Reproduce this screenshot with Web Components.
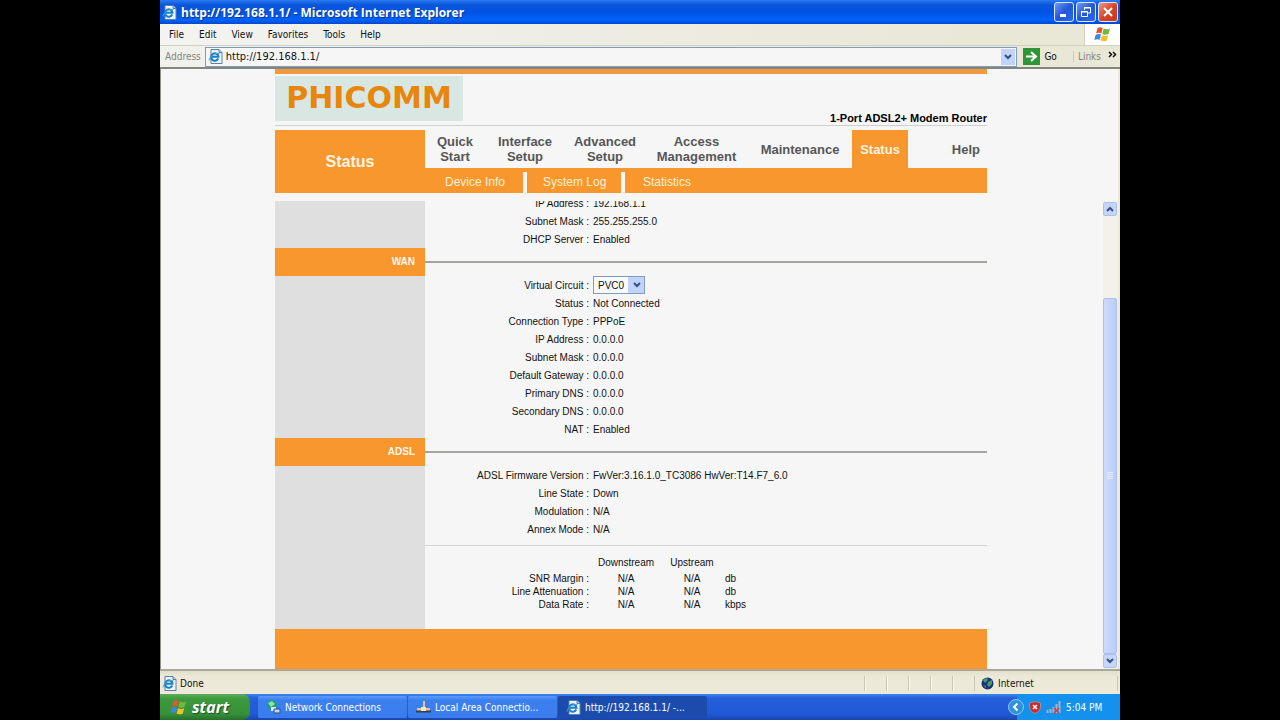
<!DOCTYPE html>
<html lang="en">
<head>
<meta charset="utf-8">
<title>http://192.168.1.1/ - Microsoft Internet Explorer</title>
<style>
    body {
        margin: 0;
        background: #000;
        font-family: "DejaVu Sans Condensed", "DejaVu Sans", sans-serif;
        font-size: 10px;
        color: #111;
    }
</style>
</head>
<body>
<xp-desktop>
    <title-bar>http://192.168.1.1/ - Microsoft Internet Explorer</title-bar>
    <menu-bar></menu-bar>
    <address-bar></address-bar>
    <router-page>
        <router-header slot="header"></router-header>
        <info-section>
            <info-row label="IP Address">192.168.1.1</info-row>
            <info-row label="Subnet Mask">255.255.255.0</info-row>
            <info-row label="DHCP Server">Enabled</info-row>
        </info-section>
        <info-section heading="WAN">
            <info-row label="Virtual Circuit"><circuit-select></circuit-select></info-row>
            <info-row label="Status">Not Connected</info-row>
            <info-row label="Connection Type">PPPoE</info-row>
            <info-row label="IP Address">0.0.0.0</info-row>
            <info-row label="Subnet Mask">0.0.0.0</info-row>
            <info-row label="Default Gateway">0.0.0.0</info-row>
            <info-row label="Primary DNS">0.0.0.0</info-row>
            <info-row label="Secondary DNS">0.0.0.0</info-row>
            <info-row label="NAT">Enabled</info-row>
        </info-section>
        <info-section heading="ADSL">
            <info-row label="ADSL Firmware Version">FwVer:3.16.1.0_TC3086 HwVer:T14.F7_6.0</info-row>
            <info-row label="Line State">Down</info-row>
            <info-row label="Modulation">N/A</info-row>
            <info-row label="Annex Mode">N/A</info-row>
            <line-stats></line-stats>
        </info-section>
    </router-page>
    <status-bar></status-bar>
    <task-bar></task-bar>
</xp-desktop>

<script>
const ieIcon = `<svg class="ie" width="15" height="15" viewBox="0 0 15 15" aria-hidden="true">
    <path d="M3 .5h8l3 3v11H3z" fill="#eef6fd" stroke="#5b7fa8"/>
    <path d="M11 .5v3h3" fill="#b9cfe6" stroke="#5b7fa8"/>
    <path d="M10.2 9.5A3.7 3.7 0 1 1 10.5 7.800H4" fill="none" stroke="#1b7fc4" stroke-width="2"/>
    <path d="M1 11.500C1 8 7 3.500 11.500 4.500" fill="none" stroke="#4ba4dc"/>
</svg>`;

const flagIcon = `<svg width="18" height="17" viewBox="0 0 18 17" aria-hidden="true">
    <path d="M3.500 2C5.500.8 7 1 8.700 2L7.300 7.600C5.500 6.600 4 6.600 2 7.500z" fill="#e4572b"/>
    <path d="M9.700 2.600C11.500 3.600 13.500 3.600 16 2.500L14.500 8C12.500 9 10.500 9 8.300 8z" fill="#72b83a"/>
    <path d="M1.700 8.700C4 7.700 5.500 7.800 7 8.700L5.600 14C4 13 2.500 13 .3 13.900z" fill="#3f86dd"/>
    <path d="M8 9.200C10 10.200 12 10.200 14.200 9.200L12.800 14.500C10.500 15.700 8.500 15.500 6.600 14.500z" fill="#f5c02c"/>
</svg>`;

const chevron = dir => `<svg width="8" height="8" viewBox="0 0 8 8" aria-hidden="true">
    <path d="${dir === "up" ? "M1 6L4 3L7 6" : "M1 2L4 5L7 2"}" fill="none" stroke="#34507f" stroke-width="2"/>
</svg>`;

const reset = `
    :host, * {
        box-sizing: border-box;
    }
    svg {
        display: block;
        flex: none;
    }
    button {
        font: inherit;
        color: inherit;
        border: 0;
        padding: 0;
        background: none;
    }
    a {
        color: inherit;
        text-decoration: none;
    }
`;

class BaseElement extends HTMLElement {

    constructor() {
        super();
        this.shadowDOM = this.attachShadow({mode: "open"});
    }

    connectedCallback() {
        this.shadowDOM.innerHTML = `<style>${reset}</style>` + this.render();
    }
}

class XpDesktop extends BaseElement {
    render() {
        return `
        <style>
            :host {
                display: flex;
                flex-direction: column;
                width: 75%;
                height: 100vh;
                margin: 0 auto;
                background: #ece9d8;
                overflow: hidden;
            }
            ::slotted(router-page) {
                flex: 1;
                min-height: 0;
            }
        </style>
        <slot></slot>`;
    }
}

class TitleBar extends BaseElement {
    render() {
        return `
        <style>
            :host {
                display: flex;
                align-items: center;
                gap: 4px;
                height: 24px;
                flex: none;
                padding: 0 2px;
                background: linear-gradient(#2a7af0, #0a56dc 5px, #0053e1 12px, #0062fb 20px, #0048cc);
                color: #fff;
            }
            h1 {
                flex: 1;
                margin: 0;
                font: bold 12px "Open Sans", sans-serif;
                text-shadow: 1px 1px #0b3a94;
            }
            .buttons {
                display: flex;
                gap: 2px;
            }
            button {
                display: grid;
                place-items: center;
                width: 20px;
                height: 20px;
                border: 1px solid #dce7fb;
                border-radius: 3px;
                background: linear-gradient(135deg, #6e9cf4, #2257d8 50%, #2c68e8);
            }
            .close {
                background: linear-gradient(135deg, #f0987a, #d8452a 50%, #c23a18);
            }
        </style>
        ${ieIcon}
        <h1><slot></slot></h1>
        <div class="buttons">
            <button aria-label="Minimize"><svg width="14" height="14"><path d="M3 10.500h6" stroke="#fff" stroke-width="3"/></svg></button>
            <button aria-label="Restore"><svg width="14" height="14" fill="none" stroke="#fff"><path d="M5.500 5V2.500h6v5.500H9M5 3h7M2.500 6.500h6v5h-6zM2 7h7"/></svg></button>
            <button class="close" aria-label="Close"><svg width="14" height="14"><path d="M3 3l8 8M11 3l-8 8" stroke="#fff" stroke-width="2"/></svg></button>
        </div>`;
    }
}

class MenuBar extends BaseElement {
    render() {
        const items = ["File", "Edit", "View", "Favorites", "Tools", "Help"];
        return `
        <style>
            :host {
                display: flex;
                justify-content: space-between;
                height: 22px;
                flex: none;
                background: linear-gradient(90deg, #f3f3f1, #e9e7d6 85%);
                border-bottom: 1px solid #d2d0c2;
            }
            nav {
                display: flex;
                align-items: center;
                gap: 15px;
                padding-left: 9px;
            }
            .throbber {
                display: grid;
                place-items: center;
                width: 36px;
                background: #fff;
                border-left: 1px solid #d2d0c2;
            }
        </style>
        <nav>${items.map(item => `<button>${item}</button>`).join("")}</nav>
        <div class="throbber">${flagIcon}</div>`;
    }
}

class AddressBar extends BaseElement {
    render() {
        return `
        <style>
            :host {
                display: flex;
                align-items: center;
                height: 23px;
                flex: none;
                padding: 0 3px 0 5px;
                background: linear-gradient(90deg, #f1f1ee, #e9e7d6 85%);
                border-bottom: 2px solid #85857d;
            }
            label, .links {
                color: #85857d;
            }
            .box {
                display: flex;
                align-items: center;
                gap: 3px;
                flex: 1;
                height: 20px;
                margin: 0 6px 0 4px;
                padding: 0 1px 0 2px;
                background: #f6f6f6;
                border: 1px solid #7f9db9;
            }
            input {
                flex: 1;
                min-width: 0;
                padding: 0;
                border: 0;
                background: none;
                font: inherit;
                font-size: 11px;
                color: inherit;
            }
            .drop {
                display: grid;
                place-items: center;
                width: 14px;
                height: 16px;
                background: #c1d3fb;
            }
            .go {
                display: flex;
                align-items: center;
                gap: 4px;
                padding-right: 16px;
            }
            .links {
                display: flex;
                gap: 7px;
                padding-left: 4px;
                border-left: 1px solid #cbc8b6;
            }
        </style>
        <label for="address">Address</label>
        <div class="box">
            ${ieIcon}
            <input id="address" value="http://192.168.1.1/">
            <button class="drop" aria-label="Show addresses">${chevron("down")}</button>
        </div>
        <button class="go">
            <svg width="17" height="17" viewBox="0 0 17 17"><path d="M0 0h17v17H0z" fill="#2f9636"/><path d="M3 8.500h9M8 4l5 4.500L8 13" fill="none" stroke="#fff" stroke-width="2"/></svg>
            Go
        </button>
        <div class="links">Links
            <svg width="9" height="8" role="img" aria-label="More links"><path d="M1 1l2.500 2.500L1 6M5 1l2.500 2.500L5 6" fill="none" stroke="#111" stroke-width="1.500"/></svg>
        </div>`;
    }
}

class RouterPage extends BaseElement {
    render() {
        return `
        <style>
            :host {
                display: flex;
                flex-direction: column;
                background: #f6f6f6;
                border-left: 1px solid #8f8f88;
                border-right: 2px solid #ece9d8;
                font-family: "Liberation Sans", Arial, sans-serif;
            }
            .top {
                padding-right: 17px;
            }
            .frame {
                display: flex;
                flex: 1;
                min-height: 0;
                margin-top: 8px;
            }
            .view {
                display: flex;
                flex-direction: column;
                justify-content: flex-end;
                align-items: center;
                flex: 1;
                overflow: hidden;
            }
            main, footer {
                width: 100%;
                max-width: 712px;
                flex: none;
            }
            footer {
                height: 40px;
                background: #f8972d;
            }
            scroll-bar {
                margin-left: 2px;
            }
        </style>
        <div class="top"><slot name="header"></slot></div>
        <div class="frame">
            <div class="view">
                <main><slot></slot></main>
                <footer></footer>
            </div>
            <scroll-bar></scroll-bar>
        </div>`;
    }
}

class RouterHeader extends BaseElement {
    render() {
        return `
        <style>
            :host {
                display: block;
                max-width: 712px;
                margin: 0 auto;
            }
            .brand {
                display: flex;
                justify-content: space-between;
                align-items: flex-end;
                height: 57px;
                padding: 2px 0 0;
                border-top: 5px solid #f09a3e;
                border-bottom: 1px solid #d0d0d0;
            }
            .logo {
                align-self: flex-start;
                width: 188px;
                height: 45px;
                background: #d9e7e2;
                color: #e8860c;
                font: bold 30px/43px "DejaVu Sans", sans-serif;
                text-align: center;
            }
            .model {
                font-size: 11px;
                line-height: 14px;
                font-weight: bold;
                color: #000;
            }
            .nav {
                display: grid;
                grid-template-columns: 150px 1fr;
                margin-top: 4px;
            }
            h2 {
                display: grid;
                place-items: center;
                margin: 0;
                background: #f8972d;
                color: #fff4e2;
                font-size: 16px;
            }
            .tabs {
                display: grid;
                grid-template-columns: 60fr 80fr 80fr 103fr 104fr 56fr 79fr;
                height: 38px;
                color: #565656;
                font-size: 13px;
                font-weight: bold;
                line-height: 15px;
                text-align: center;
            }
            .tabs a {
                display: grid;
                place-items: center;
            }
            .tabs a:nth-child(6) {
                background: #f8972d;
                color: #fff4e2;
            }
            .tabs a:last-child {
                justify-items: end;
                padding-right: 7px;
            }
            .subtabs {
                display: grid;
                grid-template-columns: 102px 98px 1fr;
                height: 25px;
                padding-top: 4px;
                background: #f8972d;
                color: #fff0d8;
                font-size: 12px;
                line-height: 21px;
            }
            .subtabs a {
                padding-left: 16px;
                border-right: 4px solid #f6f6f6;
            }
            .subtabs a:first-child {
                padding-left: 20px;
            }
            .subtabs a:last-child {
                padding-left: 18px;
                border: 0;
            }
        </style>
        <div class="brand">
            <div class="logo">PHICOMM</div>
            <div class="model">1-Port ADSL2+ Modem Router</div>
        </div>
        <div class="nav">
            <h2>Status</h2>
            <div>
                <nav class="tabs">
                    <a href="#">Quick<br>Start</a>
                    <a href="#">Interface<br>Setup</a>
                    <a href="#">Advanced<br>Setup</a>
                    <a href="#">Access<br>Management</a>
                    <a href="#">Maintenance</a>
                    <a href="#">Status</a>
                    <a href="#">Help</a>
                </nav>
                <nav class="subtabs">
                    <a href="#">Device Info</a>
                    <a href="#">System Log</a>
                    <a href="#">Statistics</a>
                </nav>
            </div>
        </div>`;
    }
}

class InfoSection extends BaseElement {
    render() {
        const heading = this.getAttribute("heading");
        return `
        <style>
            :host {
                display: block;
                background: linear-gradient(90deg, #dfdfdf 150px, transparent 150px);
            }
            header {
                display: grid;
                grid-template-columns: 150px 1fr;
                align-items: center;
            }
            h3 {
                margin: 0;
                padding-right: 10px;
                background: #f8972d;
                color: #fff8ec;
                font-size: 10px;
                line-height: 28px;
                text-align: right;
            }
            hr {
                width: 100%;
                height: 2px;
                margin: 0;
                border: 0;
                background: #a5a5a0;
            }
            .body {
                padding-left: 150px;
            }
        </style>
        ${heading ? `<header><h3>${heading}</h3><hr></header>` : ""}
        <div class="body"><slot></slot></div>`;
    }
}

class InfoRow extends BaseElement {
    render() {
        return `
        <style>
            :host {
                display: grid;
                grid-template-columns: 164px 1fr;
                align-items: center;
                column-gap: 4px;
                height: 18px;
                white-space: nowrap;
            }
            .label {
                text-align: right;
            }
        </style>
        <span class="label">${this.getAttribute("label")} :</span>
        <span><slot></slot></span>`;
    }
}

class CircuitSelect extends BaseElement {
    render() {
        return `
        <style>
            :host {
                display: grid;
                width: 52px;
            }
            select, svg {
                grid-area: 1 / 1;
            }
            select {
                appearance: none;
                height: 18px;
                padding: 0 0 0 4px;
                border: 1px solid #7f9db9;
                border-radius: 0;
                background: linear-gradient(90deg, #fafafa 34px, #c1d3fb 34px);
                font: inherit;
                color: inherit;
            }
            svg {
                place-self: center end;
                margin-right: 4px;
                pointer-events: none;
            }
        </style>
        <select aria-label="Virtual Circuit">
            <option>PVC0</option>
            <option>PVC1</option>
            <option>PVC2</option>
        </select>
        ${chevron("down")}`;
    }
}

class LineStats extends BaseElement {
    render() {
        const rows = [["SNR Margin", "db"], ["Line Attenuation", "db"], ["Data Rate", "kbps"]];
        return `
        <style>
            :host {
                display: block;
                margin-top: 7px;
                padding: 8px 0 18px;
                border-top: 1px solid #d4d4d4;
            }
            table {
                border-collapse: collapse;
                table-layout: fixed;
                width: 360px;
                font-size: 10px;
                line-height: 13px;
                text-align: center;
            }
            th, td {
                padding: 0;
                font-weight: normal;
            }
            thead th {
                line-height: 18px;
            }
            th:first-child {
                width: 168px;
                padding-right: 4px;
                text-align: right;
            }
            .rate {
                width: 66px;
            }
            td:last-child {
                text-align: left;
            }
        </style>
        <table>
            <thead>
                <tr><th></th><th class="rate">Downstream</th><th class="rate">Upstream</th><th></th></tr>
            </thead>
            <tbody>
                ${rows.map(([name, unit]) => `<tr><th>${name} :</th><td>N/A</td><td>N/A</td><td>${unit}</td></tr>`).join("")}
            </tbody>
        </table>`;
    }
}

class ScrollBar extends BaseElement {
    render() {
        return `
        <style>
            :host {
                display: flex;
                flex-direction: column;
                width: 15px;
                padding: 1px 1px 1px 0;
                background: #f3f2ea;
            }
            button {
                display: grid;
                place-items: center;
                height: 14px;
                border: 1px solid #a9c0f0;
                border-radius: 2px;
                background: #c6d6fb;
            }
            .space {
                flex: 82;
            }
            .thumb {
                display: grid;
                place-items: center;
                flex: 355;
                border: 1px solid #a9c0f0;
                border-radius: 2px;
                background: linear-gradient(90deg, #cddafc, #b9ccf8);
            }
        </style>
        <button aria-label="Scroll up">${chevron("up")}</button>
        <div class="space"></div>
        <div class="thumb"><svg width="7" height="8"><path d="M0 .5h6M0 2.500h6M0 4.500h6M0 6.500h6" stroke="#e4ecfe"/></svg></div>
        <button aria-label="Scroll down">${chevron("down")}</button>`;
    }
}

class StatusBar extends BaseElement {
    render() {
        return `
        <style>
            :host {
                display: flex;
                align-items: center;
                height: 25px;
                flex: none;
                padding: 2px 2px 0;
                border-top: 2px solid #a9a899;
                background: linear-gradient(#e2e0cc, #ece9d8 6px);
            }
            .state {
                display: flex;
                align-items: center;
                gap: 3px;
                flex: 1;
            }
            .pane {
                width: 22px;
                height: 15px;
                border-left: 1px solid #c9c6b2;
                box-shadow: inset 1px 0 #faf9f2;
            }
            .zone {
                display: flex;
                align-items: center;
                gap: 4px;
                width: 144px;
                height: 15px;
                padding-left: 6px;
                border-left: 1px solid #c9c6b2;
                border-right: 1px solid #c9c6b2;
            }
        </style>
        <div class="state">${ieIcon} Done</div>
        ${`<div class="pane"></div>`.repeat(5)}
        <div class="zone">
            <svg width="13" height="13" viewBox="0 0 13 13"><circle cx="6.500" cy="6.500" r="6" fill="#16347e"/><path d="M2 3L6 1L7 3L4 6zM7 5L11 3L11 7L8 10L6 8zM2 8L5 9L5 11z" fill="#4e9a62"/></svg>
            Internet
        </div>`;
    }
}

class TaskBar extends BaseElement {
    render() {
        const network = `<svg width="15" height="14" viewBox="0 0 15 14"><circle cx="6" cy="5" r="5" fill="#1f9d74"/><path d="M2 3l4-2 3 3-4 3z" fill="#8be0b8"/><path d="M5 7h5v4H5z" fill="#dceafa"/><path d="M8 9h6v4H8z" fill="#c3d2e4" stroke="#27508d"/></svg>`;
        const lan = `<svg width="15" height="14" viewBox="0 0 15 14"><path d="M7 1h2v7h5v3H1V8h6z" fill="#dcc890"/><path d="M0 11.500h15" stroke="#373b50" stroke-width="2"/><path d="M5 7h5v4H5z" fill="#f5ecc8"/></svg>`;
        return `
        <style>
            :host {
                display: flex;
                height: 26px;
                flex: none;
                background: linear-gradient(#3f86ee, #2560dc 4px, #2158d6 20px, #1a45ae);
                color: #fff;
            }
            .start {
                display: flex;
                align-items: center;
                gap: 4px;
                width: 90px;
                padding-left: 10px;
                border-radius: 0 8px 8px 0;
                background: linear-gradient(#5eac5b, #3c9a3c 5px, #36903a 20px, #25702a);
                font: italic bold 16px "Open Sans", sans-serif;
                text-shadow: 1px 1px 1px #1c4d1c;
            }
            .tasks {
                display: flex;
                align-items: center;
                gap: 1px;
                flex: 1;
                padding-left: 8px;
            }
            .tasks button {
                display: flex;
                align-items: center;
                gap: 4px;
                flex: 0 1 149px;
                height: 22px;
                padding-left: 8px;
                border-radius: 2px;
                background: linear-gradient(#5b9bf8, #3c80f0 4px, #3a7cec);
                white-space: nowrap;
            }
            .tasks .current {
                background: #1b4cad;
            }
            .tray {
                display: flex;
                align-items: center;
                gap: 5px;
                width: 112px;
                background: linear-gradient(90deg, transparent 9px, #1391ec 9px);
            }
        </style>
        <button class="start">${flagIcon}start</button>
        <div class="tasks">
            <button>${network}Network Connections</button>
            <button>${lan}Local Area Connectio...</button>
            <button class="current">${ieIcon}http://192.168.1.1/ -...</button>
        </div>
        <div class="tray">
            <button aria-label="Show hidden icons"><svg width="16" height="16" viewBox="0 0 16 16"><circle cx="8" cy="8" r="7.500" fill="#2f92dc" stroke="#8cc8f4"/><path d="M9.500 4.500L6 8l3.500 3.500" fill="none" stroke="#fff" stroke-width="2"/></svg></button>
            <svg width="12" height="13" viewBox="0 0 12 13"><path d="M6 .5L11.500 2v4c0 3-2 5-5.500 6.500C2.500 11 .5 9 .5 6V2z" fill="#cf2a2a" stroke="#8d93a8"/><path d="M4 4l4 4M8 4l-4 4" stroke="#fff" stroke-width="1.500"/></svg>
            <svg width="15" height="13" viewBox="0 0 15 13"><path d="M1.500 12V9M4.500 12V8M7.500 12V6M10.500 12V3M13.500 12V0" stroke="#a3b4cc" stroke-width="2"/><path d="M8 7l5 5M13 7l-5 5" stroke="#d13b48" stroke-width="1.500"/></svg>
            <span>5:04 PM</span>
        </div>`;
    }
}

customElements.define("xp-desktop", XpDesktop);
customElements.define("title-bar", TitleBar);
customElements.define("menu-bar", MenuBar);
customElements.define("address-bar", AddressBar);
customElements.define("router-page", RouterPage);
customElements.define("router-header", RouterHeader);
customElements.define("info-section", InfoSection);
customElements.define("info-row", InfoRow);
customElements.define("circuit-select", CircuitSelect);
customElements.define("line-stats", LineStats);
customElements.define("scroll-bar", ScrollBar);
customElements.define("status-bar", StatusBar);
customElements.define("task-bar", TaskBar);
</script>
</body>
</html>
